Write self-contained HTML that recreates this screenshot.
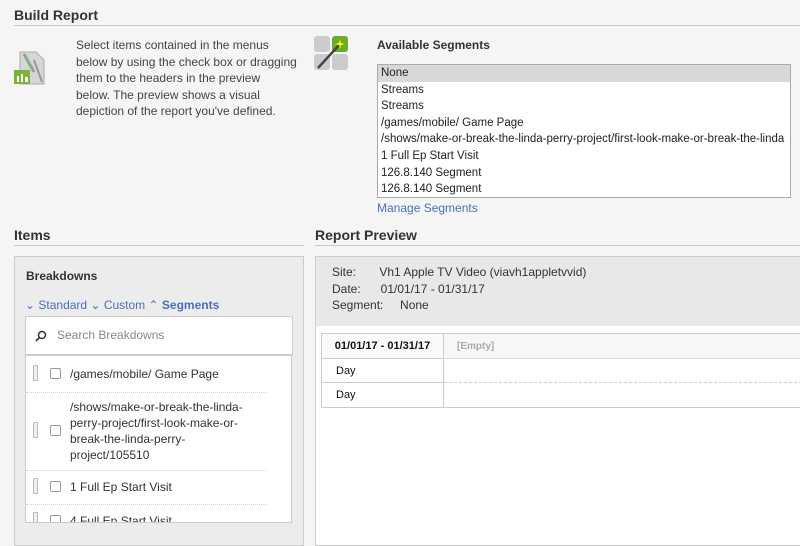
<!DOCTYPE html>
<html><head><style>
*{margin:0;padding:0;box-sizing:border-box}
body{width:800px;height:533px;background:#f5f5f5;font-family:"Liberation Sans",sans-serif;color:#333;position:relative;overflow:hidden;font-size:12px}
.a{position:absolute}
h2{position:absolute;font-size:14px;font-weight:bold;color:#333}
.hr{position:absolute;height:1px;background:#c8c8c8}
.lb div{height:16.6px;line-height:16.6px;padding-left:3px;white-space:nowrap;font-size:11.5px;color:#222}
.grip{position:absolute;left:7px;width:5px;height:16px;border:1px solid #bbb;background:#eee;border-radius:1px}
.cb{position:absolute;left:24px;width:11px;height:11px;border:1px solid #999;border-radius:2px;background:#fff}
.dv{position:absolute;left:0;width:240px;border-top:1px dotted #ccc}
.rt{position:absolute;left:44px;font-size:12px;line-height:16px;color:#333;white-space:nowrap}
</style></head><body>
<h2 style="left:14px;top:7px">Build Report</h2>
<div class="hr" style="left:14px;top:25px;width:786px"></div>
<svg class="a" style="left:12px;top:50px" width="36" height="36" viewBox="0 0 36 36">
<path d="M8 2h16l8 8v24H8z" fill="#d6d6d6" stroke="#aaa"/>
<path d="M12 4l10 18" stroke="#8a8" stroke-width="3"/>
<path d="M22 10l8 22" stroke="#999" stroke-width="2"/>
<rect x="2" y="20" width="16" height="14" fill="#7ab33a"/>
<rect x="5" y="26" width="2" height="6" fill="#fff"/><rect x="9" y="24" width="2" height="8" fill="#fff"/><rect x="13" y="27" width="3" height="5" fill="#fff"/>
</svg>
<div class="a" style="left:76px;top:37px;font-size:12px;line-height:16.5px;color:#444;white-space:nowrap">Select items contained in the menus<br>below by using the check box or dragging<br>them to the headers in the preview<br>below. The preview shows a visual<br>depiction of the report you've defined.</div>
<svg class="a" style="left:314px;top:36px" width="35" height="35" viewBox="0 0 35 35">
<rect x="0" y="0" width="16" height="16" rx="3" fill="#ccc"/><rect x="18" y="0" width="16" height="16" rx="3" fill="#6aab2a"/>
<rect x="0" y="18" width="16" height="16" rx="3" fill="#ccc"/><rect x="18" y="18" width="16" height="16" rx="3" fill="#ccc"/>
<path d="M4 32L26 8" stroke="#444" stroke-width="2.5"/><path d="M26 3l1 4 4 1-4 1-1 4-1-4-4-1 4-1z" fill="#ff0"/>
</svg>
<div class="a" style="left:377px;top:38px;font-weight:bold;font-size:12px">Available Segments</div>
<div class="a lb" style="left:377px;top:64px;width:414px;height:134px;background:#fff;border:1px solid #aaa;overflow:hidden">
<div style="background:#d8d8d8">None</div><div>Streams</div><div>Streams</div><div>/games/mobile/ Game Page</div><div>/shows/make-or-break-the-linda-perry-project/first-look-make-or-break-the-linda</div><div>1 Full Ep Start Visit</div><div>126.8.140 Segment</div><div>126.8.140 Segment</div>
</div>
<div class="a" style="left:377px;top:201px;color:#4a6fc0;font-size:12px">Manage Segments</div>

<h2 style="left:14px;top:227px">Items</h2>
<div class="hr" style="left:14px;top:245px;width:290px"></div>
<h2 style="left:315px;top:227px">Report Preview</h2>
<div class="hr" style="left:315px;top:245px;width:485px"></div>

<div class="a" style="left:14px;top:256px;width:290px;height:290px;background:#ececec;border:1px solid #ccc">
<div class="a" style="left:11px;top:12px;font-weight:bold;font-size:12px">Breakdowns</div>
<div class="a" style="left:10px;top:41px;color:#4a6fc0;font-size:12px;white-space:nowrap">⌄ Standard ⌄ Custom ⌃ <b style="font-weight:bold">Segments</b></div>
<div class="a" style="left:10px;top:59px;width:268px;height:39px;background:#fff;border:1px solid #ccc">
<svg class="a" style="left:9px;top:13px" width="12" height="12"><circle cx="7" cy="5" r="3.5" stroke="#333" stroke-width="1.5" fill="none"/><path d="M4.5 7.5L1 11" stroke="#333" stroke-width="1.8"/></svg>
<div class="a" style="left:31px;top:11px;color:#888;font-size:12px">Search Breakdowns</div></div>
<div class="a" style="left:10px;top:98px;width:267px;height:168px;background:#fff;border:1px solid #ccc;overflow:hidden">
<div class="grip" style="top:9px"></div><div class="cb" style="top:12px"></div><div class="rt" style="top:10px">/games/mobile/ Game Page</div>
<div class="dv" style="top:36px"></div>
<div class="grip" style="top:66px"></div><div class="cb" style="top:69px"></div><div class="rt" style="top:43px">/shows/make-or-break-the-linda-<br>perry-project/first-look-make-or-<br>break-the-linda-perry-<br>project/105510</div>
<div class="dv" style="top:114px"></div>
<div class="grip" style="top:122px"></div><div class="cb" style="top:125px"></div><div class="rt" style="top:123px">1 Full Ep Start Visit</div>
<div class="dv" style="top:148px"></div>
<div class="grip" style="top:156px"></div><div class="cb" style="top:159px"></div><div class="rt" style="top:157px">4 Full Ep Start Visit</div>
</div>
</div>

<div class="a" style="left:315px;top:256px;width:490px;height:290px;background:#fff;border:1px solid #ccc">
<div class="a" style="left:0;top:0;width:490px;height:69px;background:#e8e8e8"></div>
<div class="a" style="left:16px;top:7px;font-size:12px;line-height:16.5px;color:#333">Site:&nbsp;&nbsp;&nbsp;&nbsp;&nbsp;&nbsp;&nbsp;Vh1 Apple TV Video (viavh1appletvvid)<br>Date:&nbsp;&nbsp;&nbsp;&nbsp;&nbsp;&nbsp;01/01/17 - 01/31/17<br>Segment:&nbsp;&nbsp;&nbsp;&nbsp;&nbsp;None</div>
<div class="a" style="left:5px;top:76px;width:490px;height:75px;border:1px solid #ccc;border-right:none">
<div class="a" style="left:0;top:0;width:122px;height:25px;border-right:1px solid #ccc;border-bottom:1px solid #ccc;background:#fafafa;font-weight:bold;font-size:11px;text-align:center;line-height:24px;color:#111">01/01/17 - 01/31/17</div>
<div class="a" style="left:122px;top:0;width:368px;height:25px;border-bottom:1px solid #ddd;background:#f7f7f7;font-weight:bold;font-size:10px;line-height:26px;padding-left:13px;color:#aaa">[Empty]</div>
<div class="a" style="left:0;top:25px;width:122px;height:24px;border-right:1px solid #ccc;border-bottom:1px solid #ccc;line-height:24px;padding-left:14px;font-size:11px;color:#111">Day</div>
<div class="a" style="left:122px;top:48px;width:368px;border-top:1px dashed #ccc"></div>
<div class="a" style="left:0;top:49px;width:122px;height:24px;border-right:1px solid #ccc;line-height:24px;padding-left:14px;font-size:11px;color:#111">Day</div>
</div>
</div>
</body></html>
